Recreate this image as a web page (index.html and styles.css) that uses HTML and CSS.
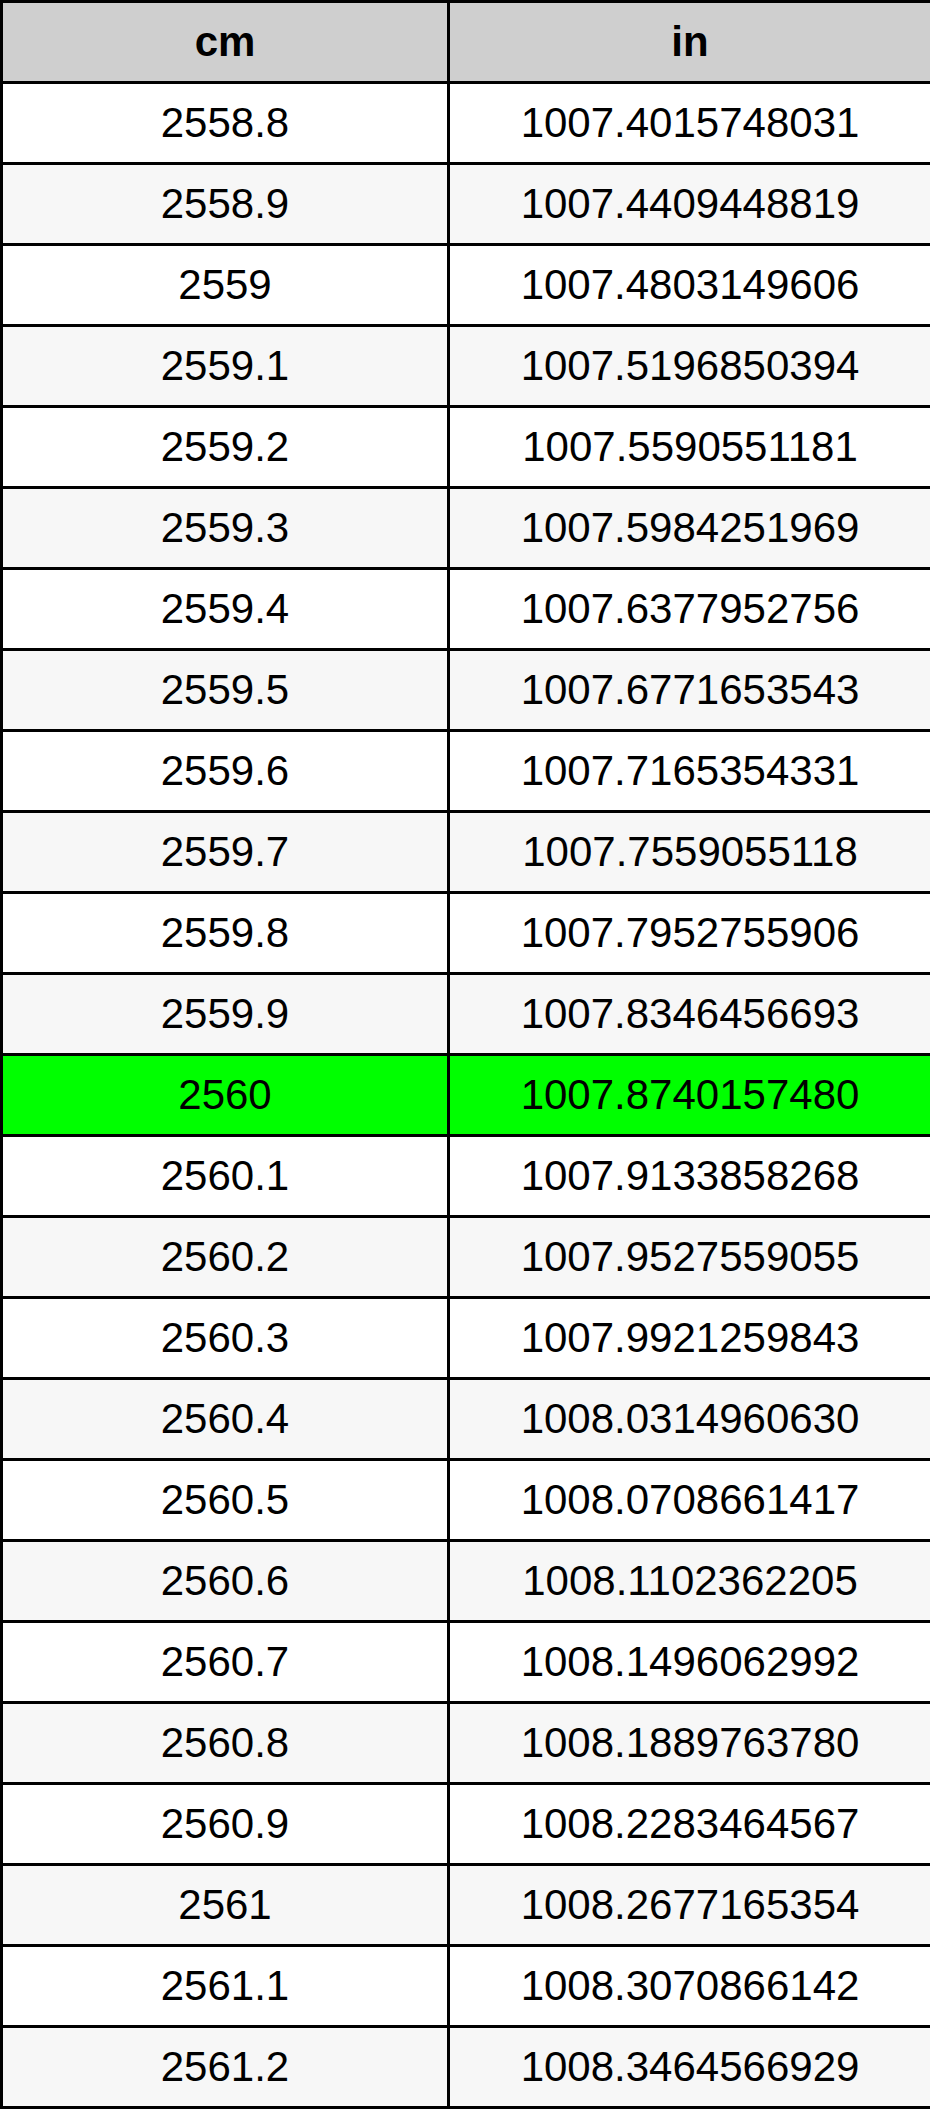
FILE: index.html
```html
<!DOCTYPE html>
<html>
<head>
<meta charset="utf-8">
<link rel="stylesheet" href="styles.css">
</head>
<body>
<table class="conv">
<colgroup><col class="c1"><col class="c2"></colgroup>
<thead>
<tr><th>cm</th><th>in</th></tr>
</thead>
<tbody>
<tr><td>2558.8</td><td>1007.4015748031</td></tr>
<tr class="alt"><td>2558.9</td><td>1007.4409448819</td></tr>
<tr><td>2559</td><td>1007.4803149606</td></tr>
<tr class="alt"><td>2559.1</td><td>1007.5196850394</td></tr>
<tr><td>2559.2</td><td>1007.5590551181</td></tr>
<tr class="alt"><td>2559.3</td><td>1007.5984251969</td></tr>
<tr><td>2559.4</td><td>1007.6377952756</td></tr>
<tr class="alt"><td>2559.5</td><td>1007.6771653543</td></tr>
<tr><td>2559.6</td><td>1007.7165354331</td></tr>
<tr class="alt"><td>2559.7</td><td>1007.7559055118</td></tr>
<tr><td>2559.8</td><td>1007.7952755906</td></tr>
<tr class="alt"><td>2559.9</td><td>1007.8346456693</td></tr>
<tr class="hl"><td>2560</td><td>1007.8740157480</td></tr>
<tr><td>2560.1</td><td>1007.9133858268</td></tr>
<tr class="alt"><td>2560.2</td><td>1007.9527559055</td></tr>
<tr><td>2560.3</td><td>1007.9921259843</td></tr>
<tr class="alt"><td>2560.4</td><td>1008.0314960630</td></tr>
<tr><td>2560.5</td><td>1008.0708661417</td></tr>
<tr class="alt"><td>2560.6</td><td>1008.1102362205</td></tr>
<tr><td>2560.7</td><td>1008.1496062992</td></tr>
<tr class="alt"><td>2560.8</td><td>1008.1889763780</td></tr>
<tr><td>2560.9</td><td>1008.2283464567</td></tr>
<tr class="alt"><td>2561</td><td>1008.2677165354</td></tr>
<tr><td>2561.1</td><td>1008.3070866142</td></tr>
<tr class="alt"><td>2561.2</td><td>1008.3464566929</td></tr>
</tbody>
</table>
</body>
</html>
```

FILE: styles.css
```css
html, body {
  margin: 0;
  padding: 0;
  background: #ffffff;
}
.conv {
  width: 930px;
  border-collapse: collapse;
  table-layout: fixed;
  font-family: "Liberation Sans", Arial, sans-serif;
  font-size: 42px;
  color: #000;
}
.conv .c1 { width: 447px; }
.conv .c2 { width: 483px; }
.conv th, .conv td {
  border: 3px solid #000;
  height: 78px;
  padding: 0;
  text-align: center;
  vertical-align: middle;
  line-height: 1;
}
.conv th {
  background: #cfcfcf;
  font-weight: bold;
}
.conv td { background: #ffffff; }
.conv tr.alt td { background: #f7f7f7; }
.conv tr.hl td { background: #00ff00; }
```
